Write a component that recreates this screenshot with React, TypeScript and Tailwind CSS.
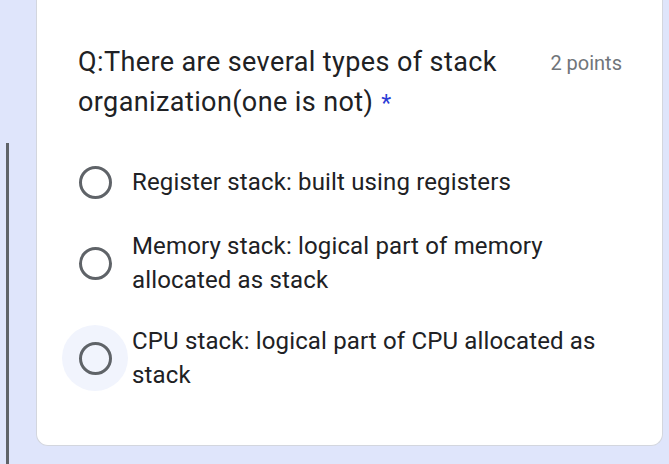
import React from "react";

function Radio({ halo = false }: { halo?: boolean }) {
  return (
    <div className="relative flex h-[34px] w-[34px] shrink-0 items-center justify-center">
      {halo && <div className="absolute left-[-16px] top-[-16px] h-[66px] w-[66px] rounded-full bg-[#f1f4fd]" />}
      <div className="relative h-[33px] w-[33px] rounded-full border-[3.5px] border-[#5f6368]" />
    </div>
  );
}

export default function App() {
  const font = { fontFamily: "Roboto, 'Noto Sans', sans-serif" };
  return (
    <div className="flex h-[464px] w-[669px] overflow-hidden bg-[#dfe5fb]" style={font}>
      <div className="flex h-full w-[36px] shrink-0 pl-[6px] pt-[143px]">
        <div className="h-full w-[3px] bg-[#5f6368]" />
      </div>
      <div className="mr-[6px] flex h-[446px] flex-1 flex-col rounded-b-[12px] border border-t-0 border-[#d3d6de] bg-white pl-[41px] pr-[40px]">
        <div className="mt-[42px] flex h-[80px] items-start justify-between">
          <div className="w-[440px] text-[27px] leading-[40px] tracking-[0.4px] text-[#202124]">
            Q:There are several types of stack organization(one is not)
            <span className="ml-[8px] text-[23px] leading-none text-[#2c3cd6]">*</span>
          </div>
          <div className="pt-[1px] text-[20px] leading-[40px] text-[#70757a]">2 points</div>
        </div>
        <div className="mt-[43px] flex items-center gap-[20px]">
          <Radio />
          <div className="text-[24px] leading-[34px] tracking-[0.15px] text-[#202124]">Register stack: built using registers</div>
        </div>
        <div className="mt-[30px] flex items-center gap-[20px]">
          <Radio />
          <div className="w-[450px] text-[24px] leading-[34px] tracking-[0.15px] text-[#202124]">
            Memory stack: logical part of memory allocated as stack
          </div>
        </div>
        <div className="mt-[27px] flex items-center gap-[20px]">
          <Radio halo />
          <div className="w-[475px] text-[24px] leading-[34px] tracking-[0.15px] text-[#202124]">
            CPU stack: logical part of CPU allocated as stack
          </div>
        </div>
      </div>
    </div>
  );
}
